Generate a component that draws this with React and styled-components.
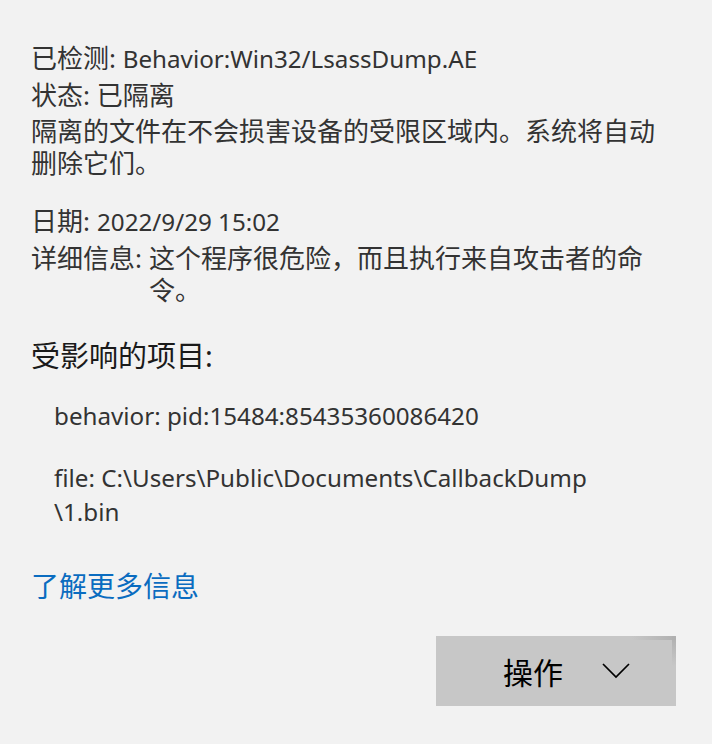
import React from "react";
import styled, { createGlobalStyle } from "styled-components";

const GlobalStyle = createGlobalStyle`
  html, body {
    margin: 0;
    padding: 0;
    background: #f2f2f2;
  }
  body {
    font-family: "Noto Sans", "Noto Sans CJK SC", sans-serif;
    color: #333;
  }
`;

const details = {
  detected: "Behavior:Win32/LsassDump.AE",
  status: "已隔离",
  note: "隔离的文件在不会损害设备的受限区域内。系统将自动删除它们。",
  date: "2022/9/29 15:02",
  info: "这个程序很危险，而且执行来自攻击者的命令。",
};

const items = [
  "behavior: pid:15484:85435360086420",
  "file: C:\\Users\\Public\\Documents\\CallbackDump\\1.bin",
];

const Page = styled.div`
  width: 712px;
  min-height: 744px;
  box-sizing: border-box;
  padding: 42px 36px 0 31px;
  display: flex;
  flex-direction: column;
`;

const TextBlock = styled.div`
  max-width: 636px;
  display: flex;
  flex-direction: column;
  gap: 4px;
  margin-top: ${(p) => p.$top || 0}px;
`;

const Line = styled.div`
  font-size: 26px;
  line-height: 32px;
  display: flex;
  gap: 7px;
`;

const Label = styled.span`
  flex: none;
`;

const Value = styled.span`
  flex: 1;
  min-width: 0;
`;

/* latin runs are set a little smaller so they keep Segoe-like widths */
const Latin = styled.span`
  font-size: 24.2px;
`;

const Heading = styled.h2`
  margin: 31px 0 0;
  font-size: 29px;
  line-height: 38px;
  font-weight: 400;
  color: #1a1a1a;
`;

const ItemList = styled.ul`
  list-style: none;
  margin: 24px 0 0;
  padding: 0 0 0 23px;
  display: flex;
  flex-direction: column;
  gap: 28px;
  max-width: 560px;
`;

const Item = styled.li`
  font-size: 24.2px;
  line-height: 34px;
`;

const Link = styled.a`
  margin-top: 40px;
  font-size: 28px;
  line-height: 34px;
  color: #0a6cc0;
  text-decoration: none;
  align-self: flex-start;
  cursor: pointer;
`;

const Actions = styled.div`
  margin-top: 33px;
  display: flex;
  justify-content: flex-end;
`;

const DropButton = styled.button`
  position: relative;
  width: 240px;
  height: 70px;
  border: none;
  background: #c7c7c7;
  padding: 0 46px 0 67px;
  display: flex;
  align-items: center;
  justify-content: space-between;
  font-family: "Noto Sans CJK SC", sans-serif;
  font-size: 30px;
  color: #000;
  cursor: pointer;

  &::before {
    content: "";
    position: absolute;
    top: 0;
    right: 0;
    width: 44px;
    height: 4px;
    background: linear-gradient(to right, rgba(170, 170, 170, 0), #b0b0b0);
  }
  &::after {
    content: "";
    position: absolute;
    top: 0;
    right: 0;
    width: 4px;
    height: 30px;
    background: linear-gradient(to bottom, #b0b0b0, rgba(170, 170, 170, 0));
  }
`;

const Chevron = () => (
  <svg width="28" height="16" viewBox="0 0 28 16" fill="none">
    <polyline points="1,1 14,14 27,1" stroke="#000" strokeWidth="1.7" />
  </svg>
);

const withBreaks = (text) =>
  text.split("\\").map((part, i) => (
    <React.Fragment key={i}>
      {i > 0 && <wbr />}
      {i > 0 && "\\"}
      {part}
    </React.Fragment>
  ));

export default function App() {
  return (
    <>
      <GlobalStyle />
      <Page>
        <TextBlock>
          <Line>
            <span>
              已检测: <Latin>{details.detected}</Latin>
            </span>
          </Line>
          <Line>
            <span>状态: {details.status}</span>
          </Line>
          <Line>
            <span>{details.note}</span>
          </Line>
        </TextBlock>

        <TextBlock $top={26}>
          <Line>
            <Label>日期:</Label>
            <Value>
              <Latin>{details.date}</Latin>
            </Value>
          </Line>
          <Line>
            <Label>详细信息:</Label>
            <Value>{details.info}</Value>
          </Line>
        </TextBlock>

        <Heading>受影响的项目:</Heading>
        <ItemList>
          {items.map((it) => (
            <Item key={it}>{withBreaks(it)}</Item>
          ))}
        </ItemList>

        <Link>了解更多信息</Link>

        <Actions>
          <DropButton>
            <span>操作</span>
            <Chevron />
          </DropButton>
        </Actions>
      </Page>
    </>
  );
}
